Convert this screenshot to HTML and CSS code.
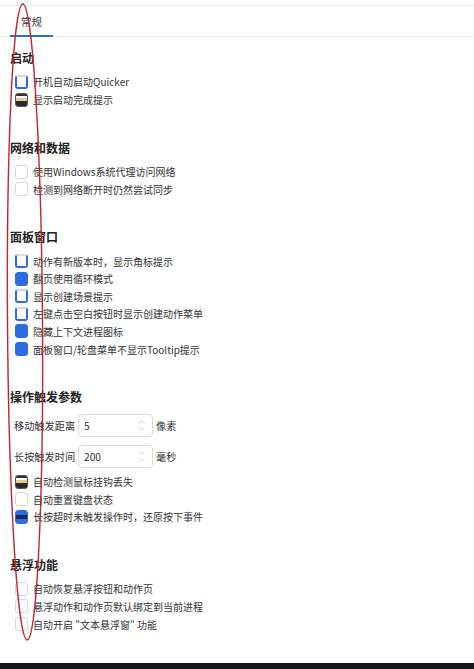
FILE: index.html
```html
<!DOCTYPE html>
<html lang="zh">
<head>
<meta charset="utf-8">
<link rel="stylesheet" href="styles.css">
</head>
<body>
<div class="page">
  <div class="topline"></div>
  <div class="tabs"><div class="tab active">常规</div></div>
  <div class="content">
    <h3 class="sec first">启动</h3>
    <label class="row"><span class="cb blue"></span>开机自动启动Quicker</label>
    <label class="row"><span class="cb dark"></span>显示启动完成提示</label>

    <h3 class="sec">网络和数据</h3>
    <label class="row"><span class="cb"></span>使用Windows系统代理访问网络</label>
    <label class="row"><span class="cb"></span>检测到网络断开时仍然尝试同步</label>

    <h3 class="sec">面板窗口</h3>
    <label class="row"><span class="cb blue"></span>动作有新版本时，显示角标提示</label>
    <label class="row"><span class="cb on"></span>翻页使用循环模式</label>
    <label class="row"><span class="cb blue"></span>显示创建场景提示</label>
    <label class="row"><span class="cb blue"></span>左键点击空白按钮时显示创建动作菜单</label>
    <label class="row"><span class="cb on"></span>隐藏上下文进程图标</label>
    <label class="row"><span class="cb on"></span>面板窗口/轮盘菜单不显示Tooltip提示</label>

    <h3 class="sec">操作触发参数</h3>
    <div class="field">
      <span class="flabel">移动触发距离</span>
      <div class="num"><span>5</span><svg class="spin" viewBox="0 0 10 14" width="9" height="13"><path d="M2 5 L5 2 L8 5 M2 9 L5 12 L8 9" fill="none" stroke="#c8c8c8" stroke-width="1"/></svg></div>
      <span class="unit">像素</span>
    </div>
    <div class="field last">
      <span class="flabel">长按触发时间</span>
      <div class="num"><span>200</span><svg class="spin" viewBox="0 0 10 14" width="9" height="13"><path d="M2 5 L5 2 L8 5 M2 9 L5 12 L8 9" fill="none" stroke="#c8c8c8" stroke-width="1"/></svg></div>
      <span class="unit">毫秒</span>
    </div>
    <label class="row"><span class="cb dark"></span>自动检测鼠标挂钩丢失</label>
    <label class="row"><span class="cb"></span>自动重置键盘状态</label>
    <label class="row"><span class="cb ondark"></span>长按超时未触发操作时，还原按下事件</label>

    <h3 class="sec">悬浮功能</h3>
    <label class="row"><span class="cb"></span>自动恢复悬浮按钮和动作页</label>
    <label class="row"><span class="cb"></span>悬浮动作和动作页默认绑定到当前进程</label>
    <label class="row"><span class="cb"></span>自动开启 "文本悬浮窗" 功能</label>
  </div>
  <div class="bottombar"></div>
  <svg class="ellipse" width="60" height="660" viewBox="0 0 60 660"><ellipse cx="25" cy="322" rx="17.5" ry="318" fill="none" stroke="#c4242b" stroke-width="1.4" transform="rotate(-0.4 25 322)"/></svg>
</div>
</body>
</html>
```
FILE: styles.css
```css
* { box-sizing: border-box; }
html, body { margin: 0; padding: 0; background: #fff; }
body { font-family: "Noto Sans CJK SC", "Noto Sans", sans-serif; color: #333; }
.page { position: relative; width: 474px; height: 669px; overflow: hidden; display: flex; flex-direction: column; }
.topline { height: 6px; border-bottom: 1px solid #ececec; flex: none; }
.tabs { display: flex; padding-left: 10px; border-bottom: 1px solid #eaeaea; height: 31px; align-items: flex-end; flex: none; }
.tab { font-size: 10.5px; line-height: 14px; padding: 0 11px 6px; color: #333; border-bottom: 2px solid #2f6be0; margin-bottom: -1px; white-space: nowrap; }
.content { flex: 1; padding: 0 10px; }
.sec { margin: 30.2px 0 6.2px; font-size: 12px; font-weight: bold; line-height: 18px; color: #222; }
.sec.first { margin-top: 12px; }
.row { display: flex; align-items: center; height: 17.6px; font-size: 10px; color: #333; padding-left: 5px; white-space: nowrap; }
.cb { width: 13px; height: 14px; border: 1px solid #d8d8d8; border-radius: 3px; margin-right: 5px; background: #fff; flex: none; }
.cb.blue { border: 2px solid #2f6be0; border-top-color: #d8d8d8; }
.cb.on { background: #2f6be0; border-color: #2f6be0; }
.cb.dark { background: linear-gradient(#333 0 2px, #fff 2px 4px, #e8c89a 4px 7px, #2b2b2b 7px); border-color: #555; }
.cb.ondark { background: linear-gradient(#2f6be0 0 4px, #1a2a55 4px 8px, #2f6be0 8px); border-color: #2f6be0; }
.field { display: flex; align-items: center; height: 22px; margin: 8.2px 0 9.5px; font-size: 10.2px; color: #333; white-space: nowrap; }
.field.last { margin-bottom: 5.2px; }
.flabel { width: 68px; padding-left: 4px; }
.num { width: 75px; height: 23px; border: 1px solid #dcdcdc; border-radius: 4px; display: flex; align-items: center; justify-content: space-between; padding: 0 6px 0 5px; margin-right: 3px; }
.bottombar { height: 6px; background: #14171b; flex: none; }
.ellipse { position: absolute; left: 0; top: 0; pointer-events: none; }
```
